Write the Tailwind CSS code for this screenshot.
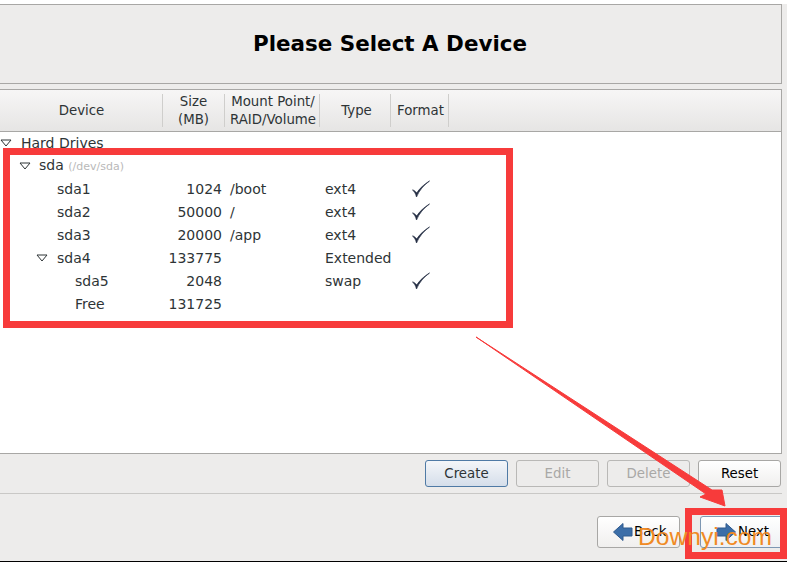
<!DOCTYPE html>
<html lang="en">
<head>
    <meta charset="UTF-8" />
    <title>Please Select A Device</title>
    <script src="https://cdn.jsdelivr.net/npm/@tailwindcss/browser@4"></script>
</head>
<body class="bg-[#edeceb] w-[787px] h-[562px] overflow-hidden relative font-['DejaVu_Sans',sans-serif] text-[14px] leading-[18px] text-[#2e3436]">
    <div class="h-[4px] bg-white"></div>

    <!-- banner -->
    <header class="h-[80px] w-[782px] border-y border-r border-[#a8a7a5] flex items-center justify-center">
        <h1 class="text-[21.45px] font-bold text-black pb-[1px] pr-[1px]">Please Select A Device</h1>
    </header>

    <!-- device tree -->
    <section class="mt-[5px] w-[782px] h-[365px] border-y border-r border-[#a8a7a5] bg-white flex flex-col">
        <div class="flex h-[42px] shrink-0 bg-gradient-to-b from-[#f7f6f6] to-[#e6e5e4] border-b border-[#a8a7a5] text-center text-[13.33px]">
            <div class="w-[163px] flex items-center justify-center border-r border-[#cfcecc] my-[4px] pl-[1px]">Device</div>
            <div class="w-[62px] flex items-center justify-center border-r border-[#cfcecc] my-[4px]">Size<br />(MB)</div>
            <div class="w-[95px] flex items-center justify-center border-r border-[#cfcecc] my-[4px] pl-[2px]">Mount Point/<br />RAID/Volume</div>
            <div class="w-[71px] flex items-center justify-center border-r border-[#cfcecc] my-[4px] pl-[3px]">Type</div>
            <div class="w-[58px] flex items-center justify-center border-r border-[#cfcecc] my-[4px] pl-[2px]">Format</div>
        </div>
        <div class="-mt-[1px]">
            <div class="flex items-center h-[23px]">
                <svg class="mr-[9px]" width="12" height="8" viewBox="0 0 12 8"><path d="M1 1 H11 L6 7 Z" fill="#fff" stroke="#2e3436" /></svg>
                <span>Hard Drives</span>
            </div>
            <div class="flex items-center h-[23px]">
                <svg class="ml-[19px] mr-[8px]" width="12" height="8" viewBox="0 0 12 8"><path d="M1 1 H11 L6 7 Z" fill="#fff" stroke="#2e3436" /></svg>
                <span>sda <span class="text-[11px] text-[#b9b9b9]">(/dev/sda)</span></span>
            </div>
            <div class="flex items-center h-[23px]">
                <div class="w-[164px] pl-[57px]">sda1</div>
                <div class="w-[58px] text-right">1024</div>
                <div class="w-[103px] pl-[8px]">/boot</div>
                <div class="w-[86px]">ext4</div>
                <svg width="20" height="20" viewBox="0 0 20 20"><path d="M1.5 11 C3 12 4.5 14 5.5 18 C8 11.5 13 6 18.5 2 C13 5.5 8 10 5.8 14 C4.5 12.5 3 11 1.5 11 Z" fill="#232c42" stroke="#232c42" stroke-width="0.7" /></svg>
            </div>
            <div class="flex items-center h-[23px]">
                <div class="w-[164px] pl-[57px]">sda2</div>
                <div class="w-[58px] text-right">50000</div>
                <div class="w-[103px] pl-[8px]">/</div>
                <div class="w-[86px]">ext4</div>
                <svg width="20" height="20" viewBox="0 0 20 20"><path d="M1.5 11 C3 12 4.5 14 5.5 18 C8 11.5 13 6 18.5 2 C13 5.5 8 10 5.8 14 C4.5 12.5 3 11 1.5 11 Z" fill="#232c42" stroke="#232c42" stroke-width="0.7" /></svg>
            </div>
            <div class="flex items-center h-[23px]">
                <div class="w-[164px] pl-[57px]">sda3</div>
                <div class="w-[58px] text-right">20000</div>
                <div class="w-[103px] pl-[8px]">/app</div>
                <div class="w-[86px]">ext4</div>
                <svg width="20" height="20" viewBox="0 0 20 20"><path d="M1.5 11 C3 12 4.5 14 5.5 18 C8 11.5 13 6 18.5 2 C13 5.5 8 10 5.8 14 C4.5 12.5 3 11 1.5 11 Z" fill="#232c42" stroke="#232c42" stroke-width="0.7" /></svg>
            </div>
            <div class="flex items-center h-[23px]">
                <div class="w-[164px] pl-[36px] flex items-center">
                    <svg class="mr-[9px]" width="12" height="8" viewBox="0 0 12 8"><path d="M1 1 H11 L6 7 Z" fill="#fff" stroke="#2e3436" /></svg>
                    <span>sda4</span>
                </div>
                <div class="w-[58px] text-right">133775</div>
                <div class="w-[103px] pl-[8px]"></div>
                <div class="w-[86px]">Extended</div>
            </div>
            <div class="flex items-center h-[23px]">
                <div class="w-[164px] pl-[75px]">sda5</div>
                <div class="w-[58px] text-right">2048</div>
                <div class="w-[103px] pl-[8px]"></div>
                <div class="w-[86px]">swap</div>
                <svg width="20" height="20" viewBox="0 0 20 20"><path d="M1.5 11 C3 12 4.5 14 5.5 18 C8 11.5 13 6 18.5 2 C13 5.5 8 10 5.8 14 C4.5 12.5 3 11 1.5 11 Z" fill="#232c42" stroke="#232c42" stroke-width="0.7" /></svg>
            </div>
            <div class="flex items-center h-[23px]">
                <div class="w-[164px] pl-[75px]">Free</div>
                <div class="w-[58px] text-right">131725</div>
            </div>
        </div>
    </section>

    <!-- partition actions -->
    <div class="flex justify-end gap-[8px] w-[782px] mt-[6px] pr-[1px] text-[13.33px]">
        <button class="w-[83px] h-[27px] rounded-[3px] border border-[#4f7aa5] bg-gradient-to-b from-[#f4f6f9] to-[#d5deea] text-[#2e3436]">Create</button>
        <button class="w-[83px] h-[27px] rounded-[3px] border border-[#b9b8b6] bg-[#edeceb] text-[#a9a8a6]">Edit</button>
        <button class="w-[83px] h-[27px] rounded-[3px] border border-[#b9b8b6] bg-[#edeceb] text-[#a9a8a6]">Delete</button>
        <button class="w-[83px] h-[27px] rounded-[3px] border border-[#a8a7a5] bg-gradient-to-b from-white to-[#f0efee] text-black">Reset</button>
    </div>
    <div class="w-[782px] mt-[6px] border-t border-[#c9c8c6]"></div>

    <!-- wizard nav -->
    <div class="flex justify-end gap-[20px] w-[783px] mt-[22px] text-[13.33px]">
        <button class="w-[83px] h-[32px] pb-[1px] rounded-[3px] border border-[#a8a7a5] bg-gradient-to-b from-white to-[#f0efee] flex items-center pl-[15px] gap-[1px] text-black">
            <svg width="20" height="20" viewBox="0 0 20 20"><path d="M0.5 10 L10 1.5 V6 H19 V14 H10 V18.5 Z" fill="#3c6ea8" stroke="#2f5a8e" /></svg>
            <span>Back</span>
        </button>
        <button class="w-[83px] h-[32px] pb-[1px] rounded-[3px] border border-[#7d97b3] bg-gradient-to-b from-white to-[#eef0f3] flex items-center pl-[15px] gap-[2px] text-black">
            <svg width="20" height="20" viewBox="0 0 20 20"><path d="M19.5 10 L10 1.5 V6 H1 V14 H10 V18.5 Z" fill="#3c6ea8" stroke="#2f5a8e" /></svg>
            <span>Next</span>
        </button>
    </div>
    <div class="absolute left-0 bottom-0 w-full h-[1px] bg-black"></div>

    <!-- annotations drawn over the screenshot -->
    <div class="absolute left-[3px] top-[148px] w-[510px] h-[180px] border-[7px] border-[#f73b3b]"></div>
    <div class="absolute left-[685px] top-[508px] w-[102px] h-[51px] border-[7px] border-[#f73b3b]"></div>
    <svg class="absolute left-0 top-0" width="787" height="562" viewBox="0 0 787 562">
        <path d="M476 337 L712 490 L722 490 L725 506 L700 497 L706 494 Z" fill="#f73b3b" stroke="#f73b3b" stroke-width="1" />
    </svg>
    <div class="absolute left-[638px] top-[522px] text-[24.6px] leading-[30px] font-['Liberation_Sans',sans-serif] text-[#f08a24]">Downyi.com</div>
</body>
</html>
